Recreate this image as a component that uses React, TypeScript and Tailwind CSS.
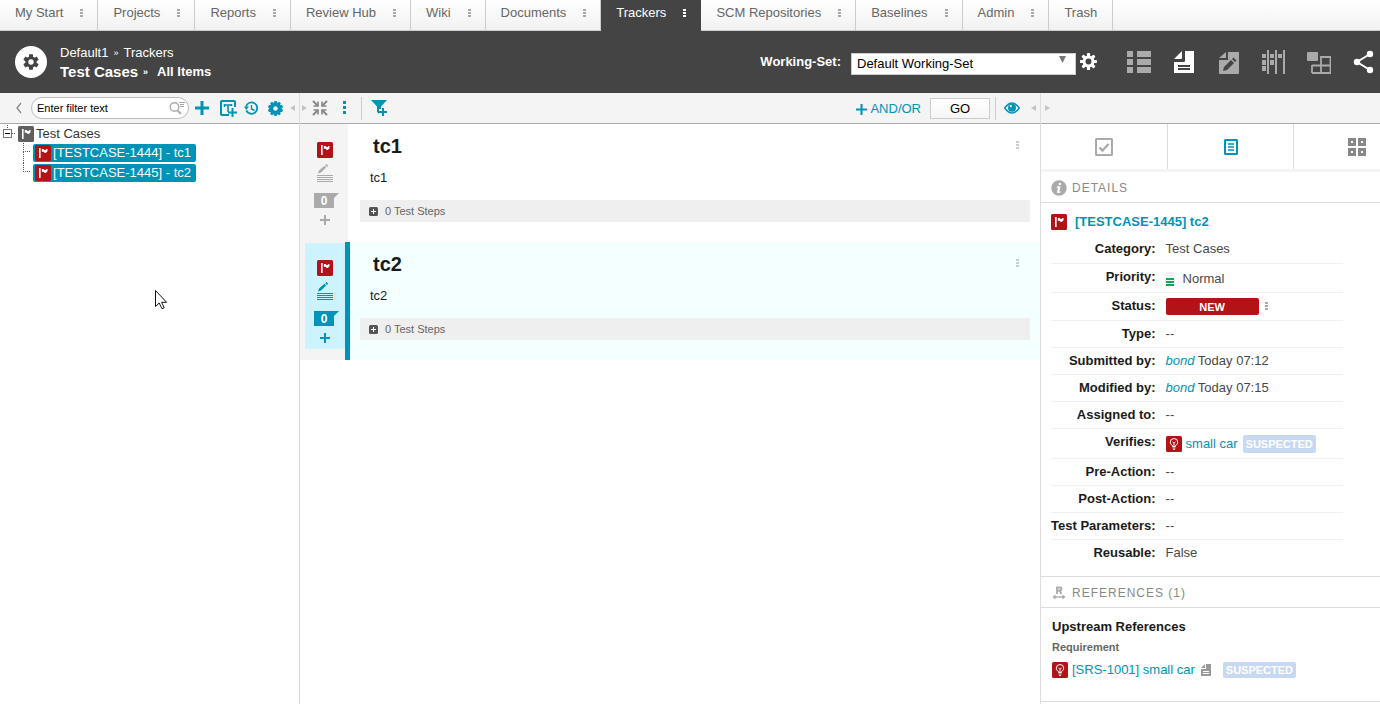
import { useState, type ReactNode } from 'react'
import clsx from 'clsx'

const tabs = [
  { label: 'My Start', menu: true },
  { label: 'Projects', menu: true },
  { label: 'Reports', menu: true },
  { label: 'Review Hub', menu: true },
  { label: 'Wiki', menu: true },
  { label: 'Documents', menu: true },
  { label: 'Trackers', menu: true, active: true },
  { label: 'SCM Repositories', menu: true },
  { label: 'Baselines', menu: true },
  { label: 'Admin', menu: true },
  { label: 'Trash', menu: false },
]

const testCases = [
  { id: 'TESTCASE-1444', name: 'tc1' },
  { id: 'TESTCASE-1445', name: 'tc2' },
]

/* ---------- Icons ---------- */

function Dots({ className }: { className?: string }) {
  return (
    <svg width="3" height="8" viewBox="0 0 3 8" fill="currentColor" className={className}>
      <path d="M0 0h3v2H0zM0 3h3v2H0zM0 6h3v2H0z" />
    </svg>
  )
}

function FlagIcon({ className = 'fill-[#b31317]' }: { className?: string }) {
  return (
    <svg width="16" height="16" viewBox="0 0 16 16" className="shrink-0">
      <rect width="16" height="16" rx="1.5" className={className} />
      <path d="M4 3h1.600v10H4zM6.800 4H8.500l1 1h1l1-1H12.500v2.200L10.800 8H9.800L8.500 6.800H6.800z" fill="#fff" />
    </svg>
  )
}

function BulbIcon() {
  return (
    <svg width="16" height="16" viewBox="0 0 16 16" className="shrink-0">
      <rect width="16" height="16" rx="1.5" fill="#b31317" />
      <path d="M6.5 9.5C5 8.700 4.300 7.700 4.300 6.200a3.700 3.700 0 0 1 7.400 0c0 1.500-.7 2.500-2.200 3.300v1h-3z" fill="none" stroke="#fff" />
      <path d="M6.500 6l1.500 1 1.500-1M8 7v3M6.500 12h3M7 13.500h2" fill="none" stroke="#fff" strokeWidth="0.9" />
    </svg>
  )
}

function PlusIcon({ size, stroke }: { size: number; stroke: number }) {
  return (
    <svg width={size} height={size} viewBox="0 0 14 14" stroke="currentColor" strokeWidth={stroke}>
      <path d="M7 0v14M0 7h14" />
    </svg>
  )
}

function Arrow({ dir }: { dir: 'left' | 'right' }) {
  return (
    <svg width="5" height="6" viewBox="0 0 5 6" fill="#c4c4c4">
      <path d={dir === 'left' ? 'M5 0v6L0 3z' : 'M0 0v6l5-3z'} />
    </svg>
  )
}

const gearTeeth = [0, 45, 90, 135]
const fineTeeth = [0, 36, 72, 108, 144]

function CogIcon({ size, body, hole, holeColor, teeth }: { size: number; body: number; hole: number; holeColor: string; teeth: number[] }) {
  return (
    <svg width={size} height={size} viewBox="0 0 16 16" fill="currentColor">
      {teeth.map((a) => (
        <rect key={a} x="6.500" y="0" width="3" height="16" rx="0.800" transform={`rotate(${a} 8 8)`} />
      ))}
      <circle cx="8" cy="8" r={body} />
      <circle cx="8" cy="8" r={hole} fill={holeColor} />
    </svg>
  )
}

function HexGear() {
  return (
    <svg width="16" height="16" viewBox="0 0 16 16">
      {[0, 60, 120].map((a) => (
        <rect key={a} x="6" y="0.300" width="4" height="15.400" rx="0.600" fill="#444" transform={`rotate(${a} 8 8)`} />
      ))}
      <circle cx="8" cy="8" r="5.700" fill="#444" />
      <circle cx="8" cy="8" r="2.700" fill="#fff" />
    </svg>
  )
}

function EditIcon() {
  return (
    <svg width="16" height="18" viewBox="0 0 16 18" fill="currentColor">
      <path d="M1 9.500l1-3L7.500 1.700l1.700 1.900L4 8.500zM8.200 1.100L9.600 0l1.700 1.700-1.400 1.300z" />
      <path d="M0 11h16v1H0zM0 13h16v1H0zM0 15h16v1H0zM0 17h16v1H0z" />
    </svg>
  )
}

function CommentBadge({ count, selected }: { count: number; selected: boolean }) {
  return (
    <span className="flex pl-[3px]">
      <span
        className={clsx(
          'h-[15px] w-5 text-center text-xs leading-4 font-bold text-white',
          selected ? 'bg-[#0093b8]' : 'bg-[#aaa]',
        )}
      >
        {count}
      </span>
      <svg width="5" height="5" viewBox="0 0 5 5" fill="currentColor">
        <path d="M0 0h5L0 5z" />
      </svg>
    </span>
  )
}

/* ---------- Header ---------- */

function TopTabs() {
  return (
    <nav className="flex h-[31px] border-b border-[#ccc] bg-linear-to-b from-white to-[#f1f1f1]">
      {tabs.map((tab) => (
        <a
          key={tab.label}
          href="#"
          className={clsx(
            'flex shrink-0 items-center gap-[17px] border-r pb-[5px] pl-[15px]',
            tab.menu ? 'pr-[14px]' : 'pr-[15px]',
            tab.active ? '-mb-px border-[#444] bg-[#444] text-white' : 'border-[#ccc] text-[#666]',
          )}
        >
          {tab.label}
          {tab.menu && <Dots className={tab.active ? 'text-white' : 'text-[#aaa]'} />}
        </a>
      ))}
    </nav>
  )
}

function ViewButton({ label, active, children }: { label: string; active?: boolean; children: ReactNode }) {
  return (
    <button aria-label={label} className={active ? 'text-white' : 'text-[#aaa]'}>
      <svg width="24" height="24" viewBox="0 0 24 24" fill="currentColor">
        {children}
      </svg>
    </button>
  )
}

function Header() {
  return (
    <header className="flex h-[62px] items-center bg-[#444] pr-1 pl-[15px] text-white">
      <div className="flex h-8 w-8 items-center justify-center rounded-full bg-white">
        <HexGear />
      </div>
      <div className="flex flex-col pt-[2px] pl-[13px]">
        <div className="flex items-center gap-[5px] leading-[18px]">
          <a href="#">Default1</a>
          <span className="text-[9px]">»</span>
          <a href="#">Trackers</a>
        </div>
        <div className="flex items-center font-bold leading-5">
          <a href="#" className="text-[15px]">Test Cases</a>
          <span className="w-[19px] pl-[5px] text-[9px]">»</span>
          <a href="#">All Items</a>
        </div>
      </div>

      <div className="ml-auto flex items-center">
        <label htmlFor="working-set" className="pr-[10px] font-bold">
          Working-Set:
        </label>
        <div className="relative mt-1">
          <select
            id="working-set"
            className="block h-[22px] w-[225px] appearance-none border border-[#ccc] bg-white pl-[5px] text-black"
          >
            <option>Default Working-Set</option>
          </select>
          <svg width="7" height="7" viewBox="0 0 7 7" className="pointer-events-none absolute top-[3px] right-[10px]" fill="#777">
            <path d="M0 0h7L3.500 7z" />
          </svg>
        </div>
        <button aria-label="Working-Set settings" className="pb-[2px] pl-1">
          <CogIcon size={17} body={5.6} hole={2.8} holeColor="#444" teeth={gearTeeth} />
        </button>
      </div>

      <div className="flex items-center gap-[21px] pl-[30px]">
        <ViewButton label="Table view">
          <path d="M0 1h6v6H0zM10 1h14v6H10zM0 9h6v6H0zM10 9h14v6H10zM0 17h6v6H0zM10 17h14v6H10z" />
        </ViewButton>
        <ViewButton label="Document view" active>
          <path d="M2 9l8-8v7q0 1-1 1H2zM13 1h9v22H2V12h10q1 0 1-1z" />
          <path d="M6 15h12v2H6zM6 18h12v2H6z" fill="#444" />
        </ViewButton>
        <ViewButton label="Document edit view">
          <path d="M2 8l7-6v6zM11 2h11v21q0 1-1 1H3q-1 0-1-1V10h9z" />
          <path d="M6 21l1-4 7-7 3 3-7 7zM15 9l1.500-1.500 3 3L18 12z" fill="#444" />
        </ViewButton>
        <ViewButton label="Cards view">
          <path d="M0 4h4v4H0zM0 10h4v5H0zM0 16h4v5H0zM8 4h4v4H8zM8 10h4v5H8zM16 4h4v4h-4zM5 0h2v24H5zM13 0h2v24h-2zM21 0h2v24h-2z" />
        </ViewButton>
        <ViewButton label="Dashboard view">
          <rect width="11" height="9" y="2" rx="1" />
          <path d="M5 15.500h18.500M5 23h18.500V7H14v16M5 15v8" fill="none" stroke="currentColor" strokeWidth="1.800" />
        </ViewButton>
        <ViewButton label="Share" active>
          <circle cx="5" cy="12" r="3.200" />
          <circle cx="18" cy="4" r="3.200" />
          <circle cx="18" cy="20" r="3.200" />
          <path d="M18 4L5 12l13 8" fill="none" stroke="currentColor" strokeWidth="2" />
        </ViewButton>
      </div>
    </header>
  )
}

/* ---------- Left panel ---------- */

function TreePanel() {
  const [filter, setFilter] = useState('Enter filter text')

  return (
    <aside className="w-[300px] shrink-0 border-r border-[#ddd]">
      <div className="flex h-[31px] items-center border-b border-[#aaa] bg-[#f4f4f4] pr-1 pl-4 text-[#0093b8]">
        <button aria-label="Back">
          <svg width="6" height="12" viewBox="0 0 6 12" fill="none" stroke="#888" strokeWidth="1.300">
            <path d="M5 1L1 6l4 5" />
          </svg>
        </button>
        <div className="relative ml-[9px]">
          <input
            aria-label="Filter tree"
            value={filter}
            onChange={(e) => setFilter(e.target.value)}
            className="block h-[22px] w-[158px] rounded-full border border-[#bbb] bg-white pl-[5px] text-[11px] text-black outline-none"
          />
          <svg width="16" height="14" viewBox="0 0 16 14" className="pointer-events-none absolute top-1 right-1" fill="none" stroke="#aaa">
            <circle cx="5.500" cy="6" r="4.300" strokeWidth="1.400" />
            <path d="M8.500 9.500L12 13" strokeWidth="1.800" />
            <path d="M10 1.500h6M11 3.500h4M11 5.500h4" />
          </svg>
        </div>
        <div className="flex flex-1 items-center justify-between pl-[6px]">
          <button aria-label="Add item">
            <PlusIcon size={14} stroke={3} />
          </button>
          <button aria-label="Add text item" className="pl-1">
            <svg width="17" height="17" viewBox="0 0 17 17" fill="none" stroke="currentColor">
              <path d="M9 15H2q-1 0-1-1V2q0-1 1-1h12q1 0 1 1v5" strokeWidth="2" />
              <path d="M4 5h8M8 5v7M4.500 4v3M11.500 4v2" strokeWidth="1.600" />
              <path d="M12.500 8v9M8 12.500h9" strokeWidth="2" />
            </svg>
          </button>
          <button aria-label="History">
            <svg width="15" height="15" viewBox="0 0 15 15" fill="none" stroke="currentColor">
              <path d="M2.300 9.500a5.700 5.700 0 1 0-.3-4" strokeWidth="1.800" />
              <path d="M7.500 4v4l3 1.500" strokeWidth="1.400" />
              <path d="M0 5.500h5L2.300 9z" fill="currentColor" stroke="none" />
            </svg>
          </button>
          <button aria-label="Tree settings" className="pl-[2px]">
            <CogIcon size={15} body={6.6} hole={2.4} holeColor="#f4f4f4" teeth={fineTeeth} />
          </button>
          <Arrow dir="left" />
        </div>
      </div>

      <ul className="pl-[3px]">
        <li>
          <div className="flex h-[19px] items-center text-[#333]">
            <svg width="13" height="19" viewBox="0 0 13 19" fill="none">
              <path d="M4.500 1v4M9 9.500h4" stroke="#555" strokeDasharray="1 1" />
              <rect x="0.500" y="5.500" width="8" height="8" stroke="#777" fill="#fff" />
              <path d="M2 9.500h5" stroke="#000" />
            </svg>
            <span className="flex gap-[2px] pl-[2px] leading-4">
              <FlagIcon className="fill-[#5f5f5f]" />
              Test Cases
            </span>
          </div>
          <ul className="pl-5">
            {testCases.map((item, i) => (
              <li key={item.id} className="flex h-5 items-center">
                <span className="flex w-[10px] flex-col self-stretch">
                  <span className="h-[9px] w-[7px] border-b border-l border-dotted border-[#555]" />
                  {i < testCases.length - 1 && <span className="flex-1 border-l border-dotted border-[#555]" />}
                </span>
                <a href="#" className="flex h-[18px] items-center gap-[2px] rounded-[2px] bg-[#0093b8] pr-[5px] pl-[2px] text-white">
                  <FlagIcon />
                  [{item.id}] - {item.name}
                </a>
              </li>
            ))}
          </ul>
        </li>
      </ul>

      {/* Mouse pointer */}
      <svg width="13" height="20" viewBox="0 0 13 20" className="pointer-events-none absolute top-[290px] left-[155px]">
        <path d="M0.500 0.500v16l3.700-3.500 2.800 5.700 2.200-1-2.600-5.400h5z" fill="#fff" stroke="#111" />
      </svg>
    </aside>
  )
}

/* ---------- Center ---------- */

function DocumentItem({ name, selected }: { name: string; selected: boolean }) {
  return (
    <article className="flex h-[118px]">
      <div className={clsx('shrink-0 bg-[#f4f4f4]', selected ? 'w-[50px] border-r-[5px] border-[#0093b8] pt-px pl-[5px]' : 'w-12 pl-[5px]')}>
        <div
          className={clsx(
            'flex w-10 flex-col items-center',
            selected ? 'h-[106px] bg-[#ccf3ff] pt-[17px] text-[#0093b8]' : 'pt-[18px] text-[#aaa]',
          )}
        >
          <FlagIcon />
          <button aria-label={`Edit ${name}`} className="pt-[6px] pb-[11px]">
            <EditIcon />
          </button>
          <CommentBadge count={0} selected={selected} />
          <button aria-label={`Comment on ${name}`} className="pt-[7px]">
            <PlusIcon size={10} stroke={2.8} />
          </button>
        </div>
      </div>
      <div className={clsx('flex-1 pr-[10px]', selected ? 'bg-[#f4ffff] pl-[10px]' : 'pl-3')}>
        <div className="flex items-start justify-between pt-[10px] pr-[11px] pl-[13px]">
          <h2 className="text-xl leading-6 font-bold text-[#1a1a1a]">{name}</h2>
          <button aria-label={`${name} menu`} className="pt-[7px]">
            <Dots className="text-[#ccc]" />
          </button>
        </div>
        <p className="pt-[11px] pb-[13px] pl-[10px] leading-[18px] text-[#1a1a1a]">{name}</p>
        <button className="flex h-[22px] w-full items-center gap-[7px] bg-[#efefef] pl-[9px] text-[11px] text-[#666]">
          <svg width="9" height="9" viewBox="0 0 9 9">
            <rect width="9" height="9" rx="1.500" fill="#555" />
            <path d="M4.500 2v5M2 4.500h5" stroke="#fff" />
          </svg>
          0 Test Steps
        </button>
      </div>
    </article>
  )
}

function DocumentPanel() {
  return (
    <main className="min-w-0 flex-1">
      <div className="flex h-[31px] items-center border-b border-[#aaa] bg-[#f4f4f4] pr-1 pl-[2px] text-[#0093b8]">
        <Arrow dir="right" />
        <button aria-label="Collapse all" className="pl-[5px]">
          <svg width="16" height="16" viewBox="0 0 16 16" fill="none" stroke="#888" strokeWidth="2">
            <path d="M1 1l5 5M15 1l-5 5M1 15l5-5M15 15l-5-5" />
            <path d="M6 1.500V6H1.500M10 1.500V6h4.500M6 14.500V10H1.500M10 14.500V10h4.500" strokeWidth="1.600" />
          </svg>
        </button>
        <button aria-label="More actions" className="pl-[15px]">
          <svg width="3" height="14" viewBox="0 0 3 14" fill="currentColor">
            <path d="M0 0h3v3H0zM0 5h3v3H0zM0 10h3v3H0z" />
          </svg>
        </button>
        <span className="ml-[15px] h-[23px] w-px bg-[#ccc]" />
        <button aria-label="Add filter" className="pl-[9px]">
          <svg width="16" height="16" viewBox="0 0 16 16" fill="currentColor">
            <path d="M0 0h16l-6 6.500V9H8v5l-2-2V6.500z" />
            <path d="M10 8h3v3h3v2h-3v3h-2v-3H8v-2h3V8z" />
          </svg>
        </button>

        <div className="ml-auto flex items-center">
          <button className="flex items-center gap-[3px] pt-[2px]">
            <PlusIcon size={11} stroke={2.6} />
            AND/OR
          </button>
          <button className="ml-[9px] h-[21px] w-[60px] border border-[#ccc] bg-linear-to-b from-white to-[#f6f6f6] text-black">
            GO
          </button>
          <span className="ml-[5px] h-[23px] w-px bg-[#ccc]" />
          <button aria-label="Show fields" className="px-2">
            <svg width="16" height="12" viewBox="0 0 16 12">
              <path d="M0.700 6Q8-4 15.300 6 8 16 0.700 6z" fill="none" stroke="currentColor" strokeWidth="1.500" />
              <circle cx="8" cy="5.700" r="4" fill="currentColor" />
              <circle cx="6.800" cy="4.200" r="1.100" fill="#f4f4f4" />
            </svg>
          </button>
          <span className="pl-[3px]">
            <Arrow dir="left" />
          </span>
        </div>
      </div>
      <DocumentItem name="tc1" selected={false} />
      <DocumentItem name="tc2" selected />
    </main>
  )
}

/* ---------- Right panel ---------- */

function Suspected() {
  return <span className="rounded-[2px] bg-[#c7d8f2] px-[3px] text-[11px] font-bold text-white">SUSPECTED</span>
}

function Row({ label, children, className = 'h-[27px]' }: { label: string; children: ReactNode; className?: string }) {
  return (
    <tr className={clsx('border-b border-[#f0f0f0] last:border-0', className)}>
      <th scope="row" className="w-[104px] pt-1 text-right align-top leading-[18px] font-bold whitespace-nowrap text-[#1a1a1a]">
        {label}:
      </th>
      <td className="pt-1 pl-[10px] align-top leading-[18px]">{children}</td>
    </tr>
  )
}

function DetailsPanel() {
  return (
    <aside className="w-[340px] shrink-0 border-l border-[#ddd] text-[#484848]">
      <div className="flex h-[31px] items-center border-b border-[#aaa] bg-[#f4f4f4] pl-1">
        <Arrow dir="right" />
      </div>

      <div className="flex h-12 overflow-hidden border-b-[3px] border-[#f4f4f4]">
        <button aria-label="Review" className="flex w-[126px] shrink-0 items-center justify-center">
          <svg width="18" height="18" viewBox="0 0 18 18" fill="none" stroke="#aaa" strokeWidth="2">
            <rect x="1" y="1" width="16" height="16" rx="0.500" />
            <path d="M4.500 9.500l3 3 6-6.500" strokeWidth="2.400" />
          </svg>
        </button>
        <button aria-label="Properties" className="flex w-[126px] shrink-0 items-center justify-center border-l border-[#ddd] text-[#0093b8]">
          <svg width="14" height="16" viewBox="0 0 14 16" fill="none" stroke="currentColor" strokeWidth="2">
            <rect x="1" y="1" width="12" height="14" rx="0.500" />
            <path d="M4 5h6M4 8h6M4 11h6" strokeWidth="1.500" />
          </svg>
        </button>
        <button aria-label="Widgets" className="flex w-[126px] shrink-0 items-center justify-center border-l border-[#ddd]">
          <svg width="18" height="18" viewBox="0 0 18 18" fill="none" stroke="#888" strokeWidth="3">
            <path d="M1.500 1.500h5v5h-5zM11.500 1.500h5v5h-5zM1.500 11.500h5v5h-5zM11.500 11.500h5v5h-5z" />
          </svg>
        </button>
      </div>

      <h3 className="flex h-[31px] items-center gap-[5px] border-b border-[#ddd] pt-px pl-[10px] text-xs tracking-[1px] text-[#888]">
        <svg width="16" height="16" viewBox="0 0 16 16">
          <circle cx="8" cy="8" r="7.700" fill="#aaa" />
          <path d="M8 3h2.200l-.4 2H7.600zM6 6.300h3.500L8.300 11.500h1.200L9.200 13H5.800l1.200-5.200H5.700z" fill="#fff" />
        </svg>
        DETAILS
      </h3>

      <div className="px-[10px] pt-[9px] pb-[10px]">
        <a href="#" className="flex items-center gap-2 leading-5 font-bold text-[#0093b8]">
          <FlagIcon />
          [TESTCASE-1445] tc2
        </a>
        <table className="mt-1 w-[292px]">
          <tbody>
            <Row label="Category">Test Cases</Row>
            <Row label="Priority" className="h-[29px]">
              <span className="flex items-center gap-[9px] pt-[2px]">
                <svg width="8" height="14" viewBox="0 0 8 14" fill="#00a85d">
                  <path d="M0 0h8v2H0zM0 3h8v2H0z" fill="#f0f0f0" />
                  <path d="M0 6h8v2H0zM0 9h8v2H0zM0 12h8v2H0z" />
                </svg>
                Normal
              </span>
            </Row>
            <Row label="Status" className="h-7">
              <span className="flex items-center gap-[6px] pt-px">
                <span className="h-[17px] w-[93px] rounded-[2px] bg-[#b31317] text-center text-[11px] leading-[18px] font-bold text-white">
                  NEW
                </span>
                <button aria-label="Change status">
                  <Dots className="text-[#aaa]" />
                </button>
              </span>
            </Row>
            <Row label="Type">--</Row>
            <Row label="Submitted by">
              <a href="#" className="text-[#0093b8] italic">bond</a> Today 07:12
            </Row>
            <Row label="Modified by">
              <a href="#" className="text-[#0093b8] italic">bond</a> Today 07:15
            </Row>
            <Row label="Assigned to">--</Row>
            <Row label="Verifies" className="h-[30px]">
              <span className="flex items-center pt-[2px]">
                <BulbIcon />
                <a href="#" className="pr-[5px] pl-1 text-[#0093b8]">small car</a>
                <Suspected />
              </span>
            </Row>
            <Row label="Pre-Action">--</Row>
            <Row label="Post-Action">--</Row>
            <Row label="Test Parameters">--</Row>
            <Row label="Reusable">False</Row>
          </tbody>
        </table>
      </div>

      <h3 className="flex h-8 items-center gap-[5px] border-y border-[#ddd] pt-px pl-[10px] text-xs tracking-[1px] text-[#888]">
        <svg width="16" height="14" viewBox="0 0 16 14" fill="none" stroke="#aaa">
          <path d="M6 8V1.500h3q1.500 0 1.500 1.500T9 4.500H6M8.500 4.500l2 3.500" strokeWidth="1.800" />
          <path d="M3 11h10" strokeWidth="1.400" />
          <path d="M4.500 8.500v5L1.500 11zM11.500 8.500v5l3-2.500z" fill="#aaa" stroke="none" />
        </svg>
        REFERENCES (1)
      </h3>

      <div className="border-b border-[#ddd] px-[11px] pt-[9px] pb-[21px]">
        <h4 className="leading-5 font-bold text-[#1a1a1a]">Upstream References</h4>
        <div className="text-[11px] leading-5 font-bold text-[#666]">Requirement</div>
        <div className="flex items-center pt-[3px] leading-5">
          <BulbIcon />
          <a href="#" className="pl-1 text-[#0093b8]">[SRS-1001] small car</a>
          <svg width="10" height="12" viewBox="0 0 10 12" fill="#999" className="mr-3 ml-[6px]">
            <path d="M0 4l4-4v4zM5 0h5v12H0V5h5z" />
            <path d="M2 7h6v1H2zM2 9h6v1H2z" fill="#fff" />
          </svg>
          <span className="flex leading-4">
            <Suspected />
          </span>
        </div>
      </div>
    </aside>
  )
}

export default function App() {
  return (
    <div className="relative flex min-h-screen flex-col bg-white font-['Liberation_Sans',Arial,sans-serif] text-[13px]">
      <TopTabs />
      <Header />
      <div className="flex flex-1">
        <TreePanel />
        <DocumentPanel />
        <DetailsPanel />
      </div>
    </div>
  )
}
